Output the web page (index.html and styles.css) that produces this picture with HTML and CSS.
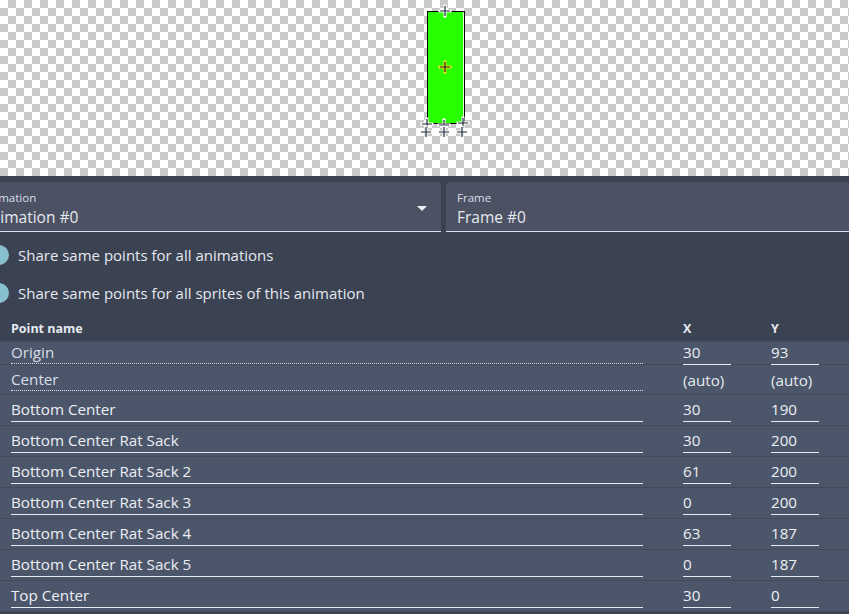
FILE: index.html
```html
<!DOCTYPE html>
<html>
<head>
<meta charset="utf-8">
<link rel="stylesheet" href="styles.css">
</head>
<body>
<div class="canvas">
  <svg class="sprite-svg" width="849" height="176" viewBox="0 0 849 176">
    <defs>
      <g id="cross">
        <path d="M-5 0H5M0 -5V5" stroke="#ffffff" stroke-width="3" stroke-linecap="square"/>
        <path d="M-5 0H5M0 -5V5" stroke="#1d2a3c" stroke-width="1.2"/>
      </g>
      <g id="crossy">
        <path d="M-5 0H5M0 -5V5" stroke="#f0e020" stroke-width="3" stroke-linecap="square"/>
        <path d="M-5 0H5M0 -5V5" stroke="#1d1d10" stroke-width="1.2"/>
      </g>
    </defs>
    <rect x="427.5" y="11.5" width="37" height="112" fill="#28ff00" stroke="#000" stroke-width="1"/>
    <line x1="463.5" y1="12" x2="463.5" y2="122" stroke="#dfffd0" stroke-width="1"/>
    <use href="#cross" x="445" y="11"/>
    <use href="#crossy" x="445" y="67"/>
    <use href="#cross" x="427" y="124"/>
    <use href="#cross" x="444" y="125"/>
    <use href="#cross" x="463" y="123"/>
    <use href="#cross" x="426" y="132"/>
    <use href="#cross" x="444" y="132"/>
    <use href="#cross" x="462" y="132"/>
  </svg>
</div>
<div class="fields">
  <div class="field field-left">
    <div class="field-label">Animation</div>
    <div class="field-value">Animation #0</div>
    <span class="arrow"></span>
  </div>
  <div class="field field-right">
    <div class="field-label">Frame</div>
    <div class="field-value">Frame #0</div>
  </div>
</div>
<div class="toggles">
  <div class="toggle-row"><span class="thumb"></span><span class="toggle-text">Share same points for all animations</span></div>
  <div class="toggle-row"><span class="thumb"></span><span class="toggle-text">Share same points for all sprites of this animation</span></div>
</div>
<div class="table">
  <div class="thead">
    <div class="c-name">Point name</div>
    <div class="c-x">X</div>
    <div class="c-y">Y</div>
  </div>
  <div class="row row-origin">
    <div class="c-name"><span class="name dotted">Origin</span></div>
    <div class="c-x"><span class="num">30</span></div>
    <div class="c-y"><span class="num">93</span></div>
  </div>
  <div class="row row-center">
    <div class="c-name"><span class="name dotted">Center</span></div>
    <div class="c-x"><span class="auto">(auto)</span></div>
    <div class="c-y"><span class="auto">(auto)</span></div>
  </div>
  <div class="row">
    <div class="c-name"><span class="name">Bottom Center</span></div>
    <div class="c-x"><span class="num">30</span></div>
    <div class="c-y"><span class="num">190</span></div>
  </div>
  <div class="row">
    <div class="c-name"><span class="name">Bottom Center Rat Sack</span></div>
    <div class="c-x"><span class="num">30</span></div>
    <div class="c-y"><span class="num">200</span></div>
  </div>
  <div class="row">
    <div class="c-name"><span class="name">Bottom Center Rat Sack 2</span></div>
    <div class="c-x"><span class="num">61</span></div>
    <div class="c-y"><span class="num">200</span></div>
  </div>
  <div class="row">
    <div class="c-name"><span class="name">Bottom Center Rat Sack 3</span></div>
    <div class="c-x"><span class="num">0</span></div>
    <div class="c-y"><span class="num">200</span></div>
  </div>
  <div class="row">
    <div class="c-name"><span class="name">Bottom Center Rat Sack 4</span></div>
    <div class="c-x"><span class="num">63</span></div>
    <div class="c-y"><span class="num">187</span></div>
  </div>
  <div class="row">
    <div class="c-name"><span class="name">Bottom Center Rat Sack 5</span></div>
    <div class="c-x"><span class="num">0</span></div>
    <div class="c-y"><span class="num">187</span></div>
  </div>
  <div class="row">
    <div class="c-name"><span class="name">Top Center</span></div>
    <div class="c-x"><span class="num">30</span></div>
    <div class="c-y"><span class="num">0</span></div>
  </div>
</div>
</body>
</html>
```
FILE: styles.css
```css
html, body {
  margin: 0;
  padding: 0;
}
body {
  background: #3b4252;
  font-family: "Open Sans", "Noto Sans", sans-serif;
  color: #eceff4;
  width: 849px;
  height: 614px;
  overflow: hidden;
}
.canvas {
  height: 176px;
  background-color: #ffffff;
  background-image:
    linear-gradient(45deg, #c9c9c9 25%, transparent 25%, transparent 75%, #c9c9c9 75%),
    linear-gradient(45deg, #c9c9c9 25%, transparent 25%, transparent 75%, #c9c9c9 75%);
  background-size: 16px 16px;
  background-position: 0 0, 8px 8px;
}
.sprite-svg {
  display: block;
}
.fields {
  display: flex;
  gap: 5px;
  margin-top: 6px;
  margin-left: -31px;
  height: 50px;
}
.field {
  position: relative;
  background: #4c5263;
  border-radius: 4px 4px 0 0;
  border-bottom: 1px solid #d8dee9;
  box-sizing: border-box;
  padding: 8px 12px 0 12px;
}
.field-left {
  width: 472px;
}
.field-right {
  flex: 1;
  margin-right: -20px;
  padding-left: 11px;
}
.field-label {
  font-size: 11.5px;
  line-height: 16px;
  color: #d8dee9;
}
.field-value {
  font-size: 15.5px;
  line-height: 22px;
  color: #e5e9f0;
}
.arrow {
  position: absolute;
  left: 448px;
  top: 24px;
  width: 0;
  height: 0;
  border-left: 5px solid transparent;
  border-right: 5px solid transparent;
  border-top: 5px solid #eceff4;
}
.toggles {
  padding-top: 4px;
}
.toggle-row {
  display: flex;
  align-items: center;
  height: 38px;
}
.thumb {
  width: 20px;
  height: 20px;
  border-radius: 50%;
  background: #88c0d0;
  margin-left: -11px;
  margin-right: 9px;
  flex: none;
}
.toggle-text {
  font-size: 15px;
  color: #e5e9f0;
}
.table {
  margin-top: 2px;
}
.thead {
  display: flex;
  align-items: center;
  height: 26px;
  padding-top: 1px;
  font-weight: 700;
  font-size: 12.5px;
  color: #e5e9f0;
  border-bottom: 1px solid #434a58;
}
.c-name {
  width: 683px;
  padding-left: 11px;
  box-sizing: border-box;
  flex: none;
}
.c-name .name {
  display: block;
  width: 632px;
}
.c-x {
  width: 88px;
  flex: none;
}
.c-y {
  width: 78px;
  flex: none;
}
.row {
  display: flex;
  align-items: center;
  height: 31px;
  background: #4c566a;
  border-bottom: 1px solid #434a58;
  box-sizing: border-box;
  font-size: 15.2px;
  color: #eceff4;
}
.row-origin {
  height: 23px;
  align-items: flex-start;
}
.row-center {
  height: 30px;
}
.name {
  line-height: 20px;
  border-bottom: 1px solid #e5e9f0;
  padding-bottom: 2px;
}
.name.dotted {
  border-bottom: 1px dotted #d8dee9;
  color: #d8dee9;
  padding-bottom: 1px;
}
.num {
  display: block;
  width: 48px;
  line-height: 20px;
  border-bottom: 1px solid #e5e9f0;
  padding-bottom: 2px;
}
.auto {
  display: block;
  line-height: 20px;
  color: #e5e9f0;
}
```
